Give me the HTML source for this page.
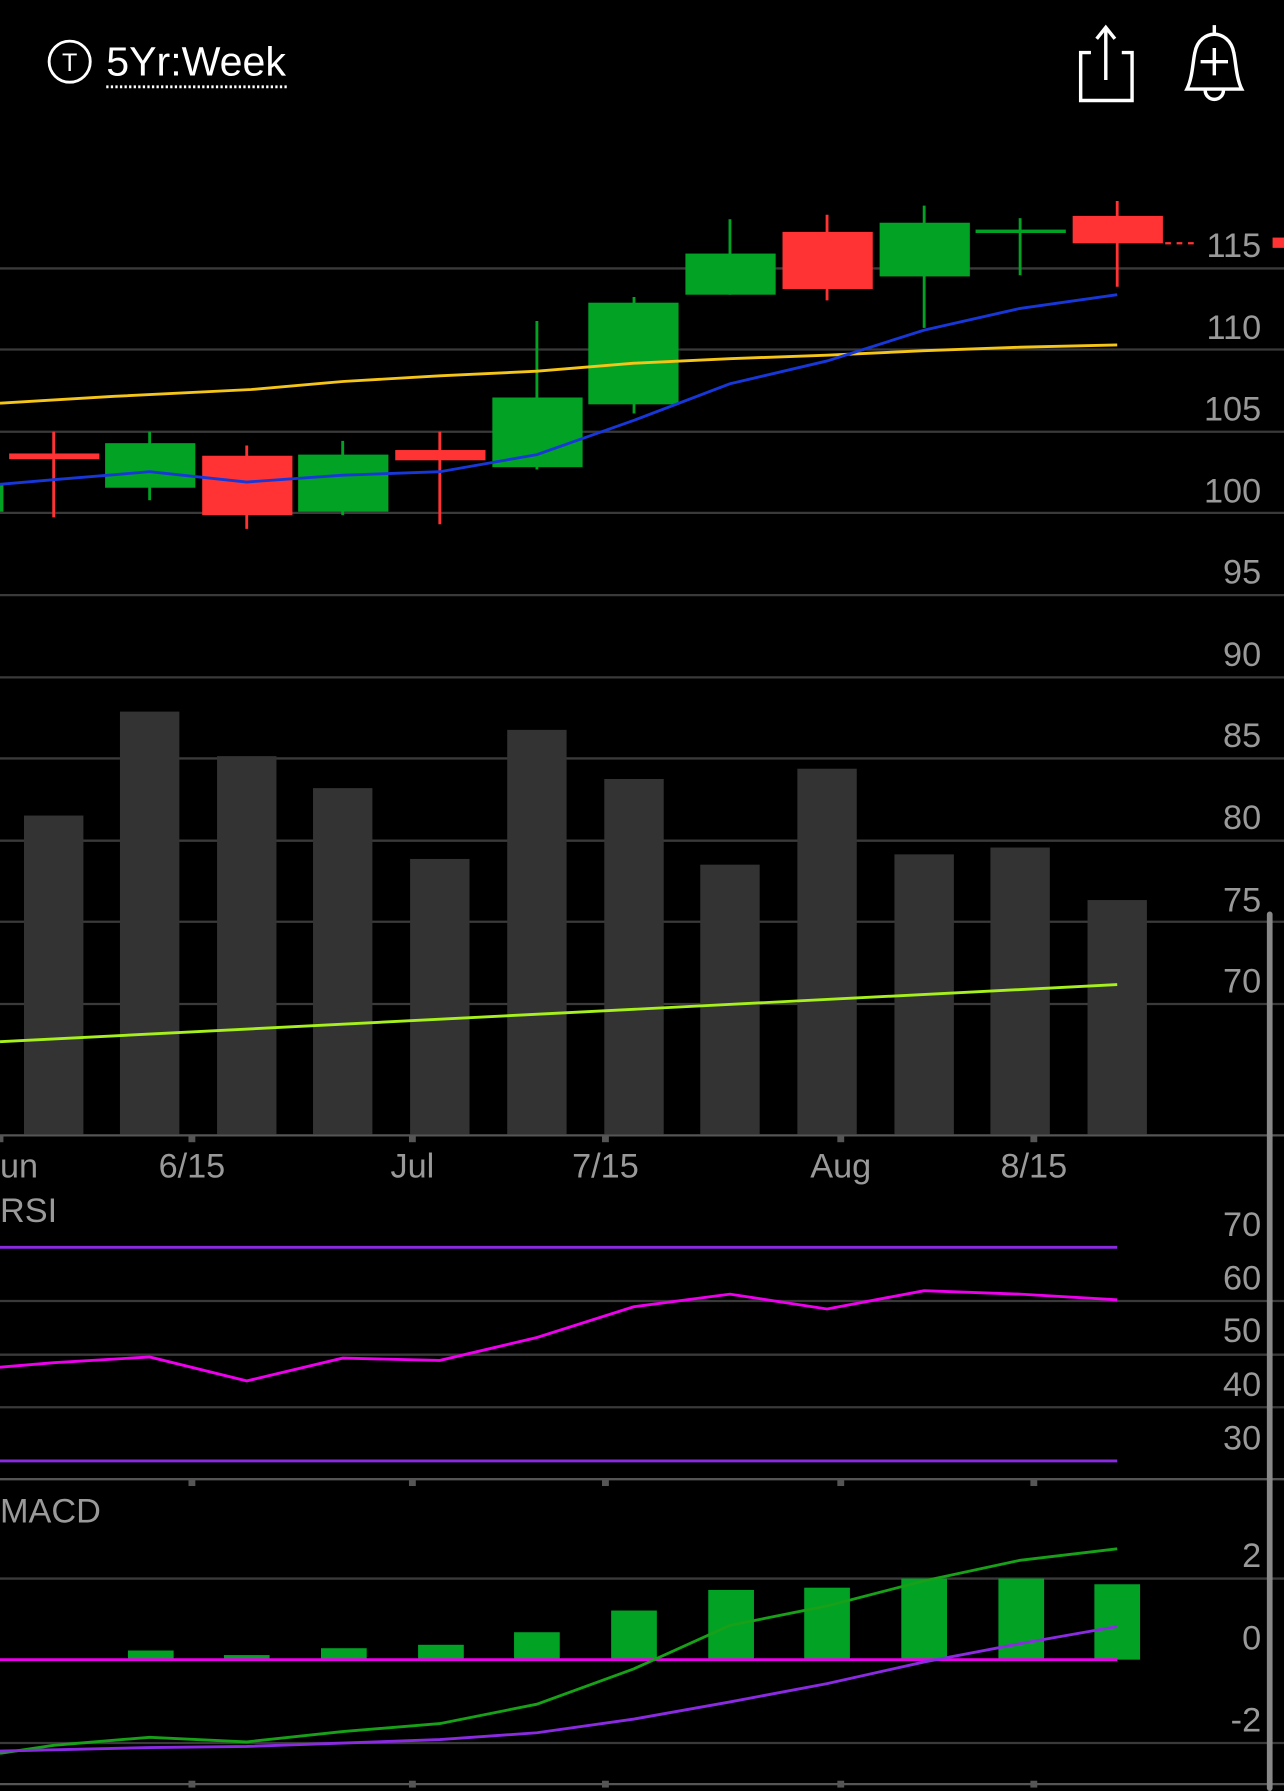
<!DOCTYPE html>
<html><head><meta charset="utf-8"><style>html,body{margin:0;padding:0;background:#000;width:1284px;height:1791px;overflow:hidden}svg{display:block}text{font-family:"Liberation Sans",sans-serif}</style></head><body>
<svg width="1284" height="1791" viewBox="0 0 1124 1568" preserveAspectRatio="none">
<rect width="1124" height="1568" fill="#000"/>
<circle cx="61" cy="54" r="18" fill="none" stroke="#fff" stroke-width="2.5"/>
<text x="61" y="62" fill="#fff" font-size="22" text-anchor="middle">T</text>
<text x="93" y="66" fill="#fff" font-size="36">5Yr:Week</text>
<line x1="93" y1="76" x2="252" y2="76" stroke="#fff" stroke-width="2.5" stroke-dasharray="2 2"/>
<g fill="none" stroke="#fff" stroke-width="3">
<path d="M955 46 H946 V88 H991 V46 H982"/><path d="M968 70 V24 M960 34 L968 24 L976 34"/>
<path d="M1063 22 V30 M1039 78 C1044 68 1044 55 1046 46 C1048 35 1056 30 1063 30 C1070 30 1078 35 1080 46 C1082 55 1082 68 1087 78 Z"/><path d="M1055 79 A8 8 0 0 0 1071 79"/><path d="M1063 42 V66 M1051 54 H1075"/>
</g>
<g stroke="#3a3a3a" stroke-width="2">
<line x1="0" y1="235" x2="1124" y2="235"/><line x1="0" y1="306" x2="1124" y2="306"/><line x1="0" y1="378" x2="1124" y2="378"/><line x1="0" y1="449" x2="1124" y2="449"/><line x1="0" y1="521" x2="1124" y2="521"/><line x1="0" y1="593" x2="1124" y2="593"/><line x1="0" y1="664" x2="1124" y2="664"/><line x1="0" y1="736" x2="1124" y2="736"/><line x1="0" y1="807" x2="1124" y2="807"/><line x1="0" y1="879" x2="1124" y2="879"/>
<line x1="0" y1="1139" x2="1124" y2="1139"/><line x1="0" y1="1186" x2="1124" y2="1186"/><line x1="0" y1="1232" x2="1124" y2="1232"/>
<line x1="0" y1="1382" x2="1124" y2="1382"/><line x1="0" y1="1526" x2="1124" y2="1526"/>
</g>
<g fill="#999" font-size="30" text-anchor="end">
<text x="1104" y="225">115</text><text x="1104" y="297">110</text><text x="1104" y="368">105</text><text x="1104" y="440">100</text><text x="1104" y="511">95</text><text x="1104" y="583">90</text><text x="1104" y="654">85</text><text x="1104" y="726">80</text><text x="1104" y="798">75</text><text x="1104" y="869">70</text>
<text x="1104" y="1082">70</text><text x="1104" y="1129">60</text><text x="1104" y="1175">50</text><text x="1104" y="1222">40</text><text x="1104" y="1269">30</text>
<text x="1104" y="1372">2</text><text x="1104" y="1444">0</text><text x="1104" y="1516">-2</text>
</g>
<line x1="1020" y1="213" x2="1048" y2="213" stroke="#f33" stroke-width="2" stroke-dasharray="5 5"/>
<rect x="1114" y="208" width="10" height="9" fill="#f33"/>
<g fill="#333">
<rect x="21" y="714" width="52" height="279"/><rect x="105" y="623" width="52" height="370"/><rect x="190" y="662" width="52" height="331"/><rect x="274" y="690" width="52" height="303"/><rect x="359" y="752" width="52" height="241"/><rect x="444" y="639" width="52" height="354"/><rect x="529" y="682" width="52" height="311"/><rect x="613" y="757" width="52" height="236"/><rect x="698" y="673" width="52" height="320"/><rect x="783" y="748" width="52" height="245"/><rect x="867" y="742" width="52" height="251"/><rect x="952" y="788" width="52" height="205"/>
</g>
<polyline points="0,912 978,862" stroke="#a6f01e" stroke-width="2.5" fill="none"/>
<g stroke-width="2.5">
<line x1="47" y1="378" x2="47" y2="453" stroke="#f33"/><rect x="8" y="397" width="79" height="5" fill="#f33"/>
<line x1="131" y1="378" x2="131" y2="438" stroke="#02a225"/><rect x="92" y="388" width="79" height="39" fill="#02a225"/>
<line x1="216" y1="390" x2="216" y2="463" stroke="#f33"/><rect x="177" y="399" width="79" height="52" fill="#f33"/>
<line x1="300" y1="386" x2="300" y2="451" stroke="#02a225"/><rect x="261" y="398" width="79" height="50" fill="#02a225"/>
<line x1="385" y1="378" x2="385" y2="459" stroke="#f33"/><rect x="346" y="394" width="79" height="9" fill="#f33"/>
<line x1="470" y1="281" x2="470" y2="411" stroke="#02a225"/><rect x="431" y="348" width="79" height="61" fill="#02a225"/>
<line x1="555" y1="260" x2="555" y2="362" stroke="#02a225"/><rect x="515" y="265" width="79" height="89" fill="#02a225"/>
<line x1="639" y1="192" x2="639" y2="258" stroke="#02a225"/><rect x="600" y="222" width="79" height="36" fill="#02a225"/>
<line x1="724" y1="188" x2="724" y2="263" stroke="#f33"/><rect x="685" y="203" width="79" height="50" fill="#f33"/>
<line x1="809" y1="180" x2="809" y2="287" stroke="#02a225"/><rect x="770" y="195" width="79" height="47" fill="#02a225"/>
<line x1="893" y1="191" x2="893" y2="241" stroke="#02a225"/><rect x="854" y="201" width="79" height="3" fill="#02a225"/>
<line x1="978" y1="176" x2="978" y2="251" stroke="#f33"/><rect x="939" y="189" width="79" height="24" fill="#f33"/>
<rect x="0" y="425" width="3" height="23" fill="#02a225"/>
</g>
<polyline fill="none" stroke="#f5c518" stroke-width="2.5" points="0,353 100,347 220,341 300,334 385,329 470,325 555,318 639,314 724,311 809,307 893,304 978,302"/>
<polyline fill="none" stroke="#1737d8" stroke-width="2.5" points="0,424 47,420 131,413 216,422 300,416 385,413 470,398 555,368 639,336 724,316 809,289 893,270 978,258"/>
<g stroke="#555" stroke-width="2"><line x1="0" y1="994" x2="1124" y2="994"/><line x1="0" y1="1295" x2="1124" y2="1295"/><line x1="0" y1="1562" x2="1124" y2="1562"/></g>
<g fill="#555"><rect x="165" y="994" width="6" height="6"/><rect x="358" y="994" width="6" height="6"/><rect x="527" y="994" width="6" height="6"/><rect x="733" y="994" width="6" height="6"/><rect x="902" y="994" width="6" height="6"/><rect x="0" y="994" width="3" height="6"/>
<rect x="165" y="1295" width="6" height="6"/><rect x="358" y="1295" width="6" height="6"/><rect x="527" y="1295" width="6" height="6"/><rect x="733" y="1295" width="6" height="6"/><rect x="902" y="1295" width="6" height="6"/>
<rect x="165" y="1559" width="6" height="6"/><rect x="358" y="1559" width="6" height="6"/><rect x="527" y="1559" width="6" height="6"/><rect x="733" y="1559" width="6" height="6"/><rect x="902" y="1559" width="6" height="6"/></g>
<g fill="#999" font-size="30"><text x="0" y="1031">un</text><text x="168" y="1031" text-anchor="middle">6/15</text><text x="361" y="1031" text-anchor="middle">Jul</text><text x="530" y="1031" text-anchor="middle">7/15</text><text x="736" y="1031" text-anchor="middle">Aug</text><text x="905" y="1031" text-anchor="middle">8/15</text>
<text x="0" y="1070">RSI</text><text x="0" y="1333">MACD</text></g>
<g stroke="#8a2be2" stroke-width="2.5"><line x1="0" y1="1092" x2="978" y2="1092"/><line x1="0" y1="1279" x2="978" y2="1279"/></g>
<polyline fill="none" stroke="#ee00ee" stroke-width="2.5" points="0,1197 47,1193 131,1188 216,1209 300,1189 385,1191 470,1171 555,1144 639,1133 724,1146 809,1130 893,1133 978,1138"/>
<g fill="#02a225"><rect x="112" y="1445" width="40" height="8"/><rect x="196" y="1449" width="40" height="4"/><rect x="281" y="1443" width="40" height="10"/><rect x="366" y="1440" width="40" height="13"/><rect x="450" y="1429" width="40" height="24"/><rect x="535" y="1410" width="40" height="43"/><rect x="620" y="1392" width="40" height="61"/><rect x="704" y="1390" width="40" height="63"/><rect x="789" y="1382" width="40" height="71"/><rect x="874" y="1382" width="40" height="71"/><rect x="958" y="1387" width="40" height="66"/></g>
<line x1="0" y1="1453" x2="978" y2="1453" stroke="#ee00ee" stroke-width="2.5"/>
<polyline fill="none" stroke="#18a018" stroke-width="2.5" points="0,1535 47,1528 131,1521 216,1525 300,1516 385,1509 470,1492 555,1461 639,1423 724,1406 809,1384 893,1366 978,1356"/>
<polyline fill="none" stroke="#8a2be2" stroke-width="2.5" points="0,1533 131,1530 216,1529 300,1526 385,1523 470,1517 555,1505 639,1490 724,1474 809,1455 893,1439 978,1424"/>
<rect x="1109" y="798" width="5" height="770" rx="2.5" fill="#888"/>
</svg>
</body></html>
